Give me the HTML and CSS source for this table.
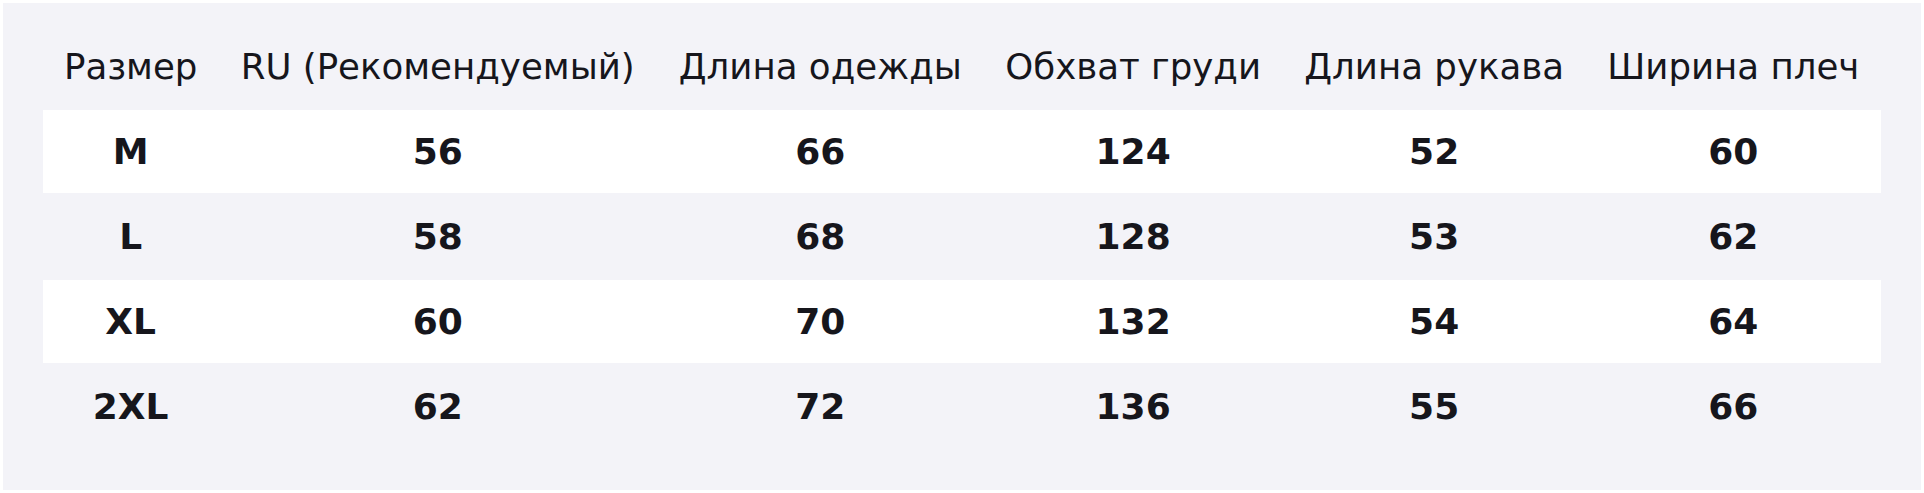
FILE: index.html
```html
<!DOCTYPE html>
<html lang="ru">
<head>
<meta charset="utf-8">
<title>Таблица размеров</title>
<link rel="stylesheet" href="styles.css">
</head>
<body>
<div class="panel">
  <table class="sizes">
    <thead>
      <tr>
        <th>Размер</th>
        <th>RU (Рекомендуемый)</th>
        <th>Длина одежды</th>
        <th>Обхват груди</th>
        <th>Длина рукава</th>
        <th>Ширина плеч</th>
      </tr>
    </thead>
    <tbody>
      <tr class="alt"><td>M</td><td>56</td><td>66</td><td>124</td><td>52</td><td>60</td></tr>
      <tr><td>L</td><td>58</td><td>68</td><td>128</td><td>53</td><td>62</td></tr>
      <tr class="alt"><td>XL</td><td>60</td><td>70</td><td>132</td><td>54</td><td>64</td></tr>
      <tr><td>2XL</td><td>62</td><td>72</td><td>136</td><td>55</td><td>66</td></tr>
    </tbody>
  </table>
</div>
</body>
</html>
```

FILE: styles.css
```css
html, body {
  margin: 0;
  padding: 0;
  background: #ffffff;
}

body {
  padding: 3px;
  font-family: "DejaVu Sans", "Liberation Sans", sans-serif;
  color: #16161c;
}

.panel {
  background: #f3f3f8;
  padding: 40px;
  height: 487px;
  box-sizing: border-box;
}

.sizes {
  width: 100%;
  border-collapse: separate;
  border-spacing: 0 2px;
}

.sizes th {
  font-weight: normal;
  font-size: 35.6px;
  line-height: 43px;
  padding: 0 20px 20px;
  text-align: center;
  white-space: nowrap;
}

.sizes td {
  font-weight: bold;
  font-size: 36px;
  line-height: 43px;
  padding: 20px 20px;
  text-align: center;
}

.sizes tr.alt td {
  background: #ffffff;
}
```
